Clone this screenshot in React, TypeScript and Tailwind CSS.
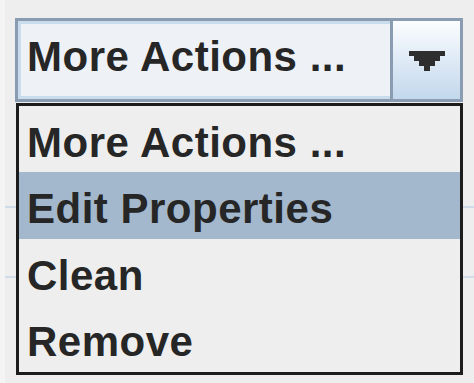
import React from 'react';

const items = ['More Actions ...', 'Edit Properties', 'Clean', 'Remove'];

const ArrowDown: React.FC = () => (
  <svg width="36" height="20" viewBox="0 0 36 20" className="block">
    <rect x="0" y="0" width="36" height="5" fill="#2e2e2e" />
    <rect x="5" y="5" width="26" height="5" fill="#2e2e2e" />
    <rect x="10" y="10" width="16" height="5" fill="#2e2e2e" />
    <rect x="15" y="15" width="6" height="5" fill="#2e2e2e" />
  </svg>
);

const App: React.FC = () => {
  const selected = 1;

  return (
    <div
      className="relative w-[474px] h-[383px] bg-[#eeeeee] border-l-[5px] border-l-[#f4f4f4] pt-[18px] pl-[10px] text-[#262626]"
      style={{ fontFamily: '"Liberation Sans", Arial, sans-serif' }}
    >
      {/* faint grid lines behind the popup */}
      <div className="absolute left-0 right-0 top-[206px] h-[2px] bg-[#cfdbe8]" />
      <div className="absolute left-0 right-0 top-[276px] h-[2px] bg-[#cfdbe8]" />

      {/* Combo box */}
      <div className="relative w-[448px] h-[84px] border-[3px] border-[#8a9cb1] flex">
        <div className="flex-1 bg-[#eef1f5] border-[3px] border-[#c9dbec] border-r-0 pl-[6px] pt-[10px]">
          <span className="block text-[42px] font-bold leading-[46px] tracking-[0.5px]">More Actions ...</span>
        </div>
        <div className="w-[3px] bg-[#8a9cb1]" />
        <div className="w-[67px] bg-gradient-to-b from-[#fbfdff] to-[#c3d8ec] flex items-center justify-center pt-[2px]">
          <ArrowDown />
        </div>
      </div>

      {/* Popup list */}
      <div className="relative ml-[1px] mt-[1px] w-[447px] border-[3px] border-[#1c1c1c] bg-[#eeeeee]">
        {items.map((item, i) => (
          <div
            key={item}
            className={`${i % 2 === 0 ? 'h-[66px]' : 'h-[67px]'} pl-[8px] pt-[14px] ${i === selected ? 'bg-[#a3b8cc]' : ''}`}
          >
            <span className="block text-[42px] font-bold leading-[46px] tracking-[0.5px]">{item}</span>
          </div>
        ))}
      </div>
    </div>
  );
};

export default App;
